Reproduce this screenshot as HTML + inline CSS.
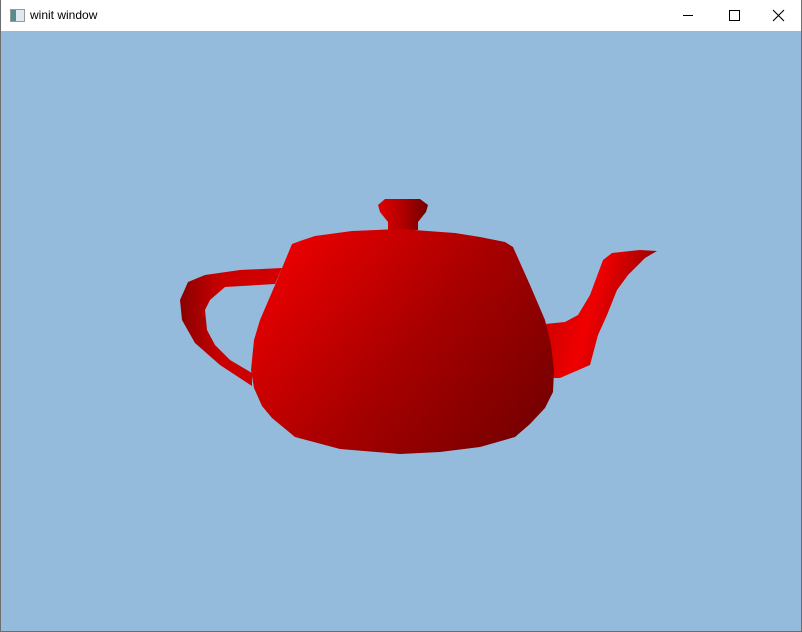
<!DOCTYPE html>
<html><head><style>
html,body{margin:0;padding:0;width:802px;height:632px;overflow:hidden;background:#6d6d6d;}
#win{position:absolute;left:1px;top:0;width:800px;height:631px;background:#94bbdb;}
#title{position:absolute;left:0;top:0;width:800px;height:31px;background:#fff;font-family:"Liberation Sans",sans-serif;font-size:12px;color:#000;}
#title .t{position:absolute;left:29px;top:8px;}
#title .ic{position:absolute;left:9px;top:9px;width:13px;height:11px;border:1px solid #999;background:linear-gradient(90deg,#5a8a8a 0 5px,#dfe9ee 5px);}
svg.btn{position:absolute;top:0;}
</style></head><body>
<div id="win">
<div id="title"><div class="ic"></div><div class="t">winit window</div>
<svg class="btn" style="left:664px" width="46" height="31"><line x1="18" y1="15.5" x2="28" y2="15.5" stroke="#000" stroke-width="1"/></svg>
<svg class="btn" style="left:710px" width="46" height="31"><rect x="18.5" y="10.5" width="10" height="10" fill="none" stroke="#000"/></svg>
<svg class="btn" style="left:756px" width="46" height="31"><path d="M16 10L27 21M27 10L16 21" stroke="#000" stroke-width="1.1"/></svg>
</div>
</div>
<svg style="position:absolute;left:0;top:0" width="802" height="632">
<defs>
<linearGradient id="g" x1="0.05" y1="0.2" x2="1" y2="0.8"><stop offset="0" stop-color="#e80000"/><stop offset="0.5" stop-color="#a80000"/><stop offset="1" stop-color="#760000"/></linearGradient>
<linearGradient id="h" x1="0" y1="0" x2="1" y2="0"><stop offset="0" stop-color="#8a0000"/><stop offset="0.4" stop-color="#c80000"/><stop offset="1" stop-color="#d40000"/></linearGradient>
<linearGradient id="s" x1="0" y1="0" x2="1" y2="0.3"><stop offset="0" stop-color="#c00000"/><stop offset="0.5" stop-color="#f00000"/><stop offset="1" stop-color="#900000"/></linearGradient>
<linearGradient id="k" x1="0" y1="0" x2="1" y2="0"><stop offset="0" stop-color="#e00000"/><stop offset="0.5" stop-color="#b00000"/><stop offset="1" stop-color="#700000"/></linearGradient>
</defs>
<path fill="url(#h)" d="M282 268L240 270L205 275L188 282L180 300L182 320L195 343L220 365L252 386L252 373L230 360L215 345L207 330L205 310L210 300L225 287L275 284Z"/>
<path fill="url(#s)" d="M545 324L565 322L578 315L590 295L603 260L612 253L640 250L657 251L645 258L628 275L617 290L607 315L598 335L590 365L560 378L553 378Z"/>
<path fill="url(#k)" d="M385 199L420 199L428 205L426 212L418 222L418 230L388 230L388 222L380 212L378 205Z"/>
<path fill="url(#g)" d="M292 244L300 241L315 236L352 231L400 229L455 233L480 237L505 242L513 247L530 285L545 320L551 345L554 370L553 392L545 408L530 424L515 437L480 447L440 452L400 454L340 449L295 437L272 418L262 406L254 388L251 370L254 340L260 320L275 285Z"/>
</svg>
</body></html>
